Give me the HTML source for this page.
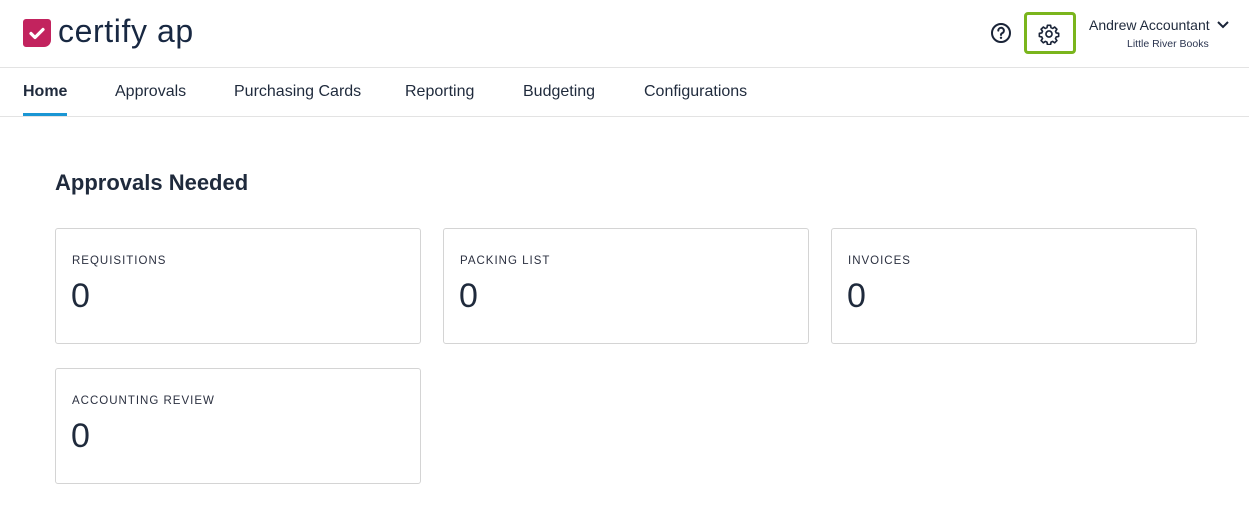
<!DOCTYPE html>
<html><head><style>
*{margin:0;padding:0;box-sizing:border-box}
body{width:1249px;height:509px;background:#fff;font-family:"Liberation Sans",sans-serif;color:#1f2a3c;position:relative;overflow:hidden}
.abs{position:absolute}
.hdr{top:0;left:0;width:1249px;height:68px;border-bottom:1px solid #e3e3e3}
.nav{top:68px;left:0;width:1249px;height:49px;border-bottom:1px solid #e3e3e3}
.nav span{position:absolute;top:15px;font-size:16px;color:#1f2a3c}
.card{border:1px solid #d4d4d4;border-radius:3px;width:366px;height:116px}
.card .l{position:absolute;left:16px;top:26px;font-size:11.5px;letter-spacing:1.0px;color:#2b3040}
.card .n{position:absolute;left:15px;top:48px;font-size:34px;color:#1f2a3c;font-weight:300}
</style></head><body>
<div class="abs hdr"></div>
<div class="abs" style="left:23px;top:19px;width:28px;height:28px;background:#c2235e;border-radius:3px 3px 7px 3px"></div>
<svg class="abs" style="left:23px;top:19px" width="28" height="28"><path d="M8 14.5l4 4 8-8" stroke="#fff" stroke-width="3.2" fill="none" stroke-linecap="round" stroke-linejoin="round"/></svg>
<div class="abs" style="left:58px;top:13px;font-size:32px;color:#182842;letter-spacing:0.6px">certify ap</div>
<svg class="abs" style="left:990px;top:22px" width="22" height="22" viewBox="0 0 22 22"><circle cx="11" cy="11" r="9" stroke="#1a2438" stroke-width="2" fill="none"/><path d="M8.3 8.6a2.8 2.8 0 1 1 3.8 2.6c-.8.4-1.1.9-1.1 1.8" stroke="#1a2438" stroke-width="2" fill="none" stroke-linecap="round"/><circle cx="11" cy="15.8" r="1.2" fill="#1a2438"/></svg>
<div class="abs" style="left:1024px;top:12px;width:52px;height:42px;border:3px solid #7ab51d;border-radius:4px"></div>
<svg class="abs" style="left:1038px;top:23px" width="22" height="22" viewBox="0 0 24 24"><path d="M10.3 2.5h3.4l.5 2.6 1.8.8 2.2-1.5 2.4 2.4-1.5 2.2.8 1.8 2.6.5v3.4l-2.6.5-.8 1.8 1.5 2.2-2.4 2.4-2.2-1.5-1.8.8-.5 2.6h-3.4l-.5-2.6-1.8-.8-2.2 1.5-2.4-2.4 1.5-2.2-.8-1.8-2.6-.5v-3.4l2.6-.5.8-1.8-1.5-2.2 2.4-2.4 2.2 1.5 1.8-.8z" stroke="#1a2438" stroke-width="1.8" fill="none" stroke-linejoin="round"/><circle cx="12" cy="12" r="3.3" stroke="#1a2438" stroke-width="1.8" fill="none"/></svg>
<div class="abs" style="left:1089px;top:17px;font-size:14px;color:#1f2a3c">Andrew Accountant</div>
<svg class="abs" style="left:1216px;top:20px" width="14" height="10"><path d="M2 2l5 5 5-5" stroke="#1a2438" stroke-width="2" fill="none"/></svg>
<div class="abs" style="left:1127px;top:38px;font-size:10.5px;color:#2b3550">Little River Books</div>
<div class="abs nav">
<span style="left:23px;font-weight:bold">Home</span>
<span style="left:115px">Approvals</span>
<span style="left:234px">Purchasing Cards</span>
<span style="left:405px">Reporting</span>
<span style="left:523px">Budgeting</span>
<span style="left:644px">Configurations</span>
</div>
<div class="abs" style="left:23px;top:113px;width:44px;height:3px;background:#1a96d4"></div>
<div class="abs" style="left:55px;top:170px;font-size:22px;font-weight:bold;color:#1f2a3c">Approvals Needed</div>
<div class="abs card" style="left:55px;top:228px"><div class="l">REQUISITIONS</div><div class="n">0</div></div>
<div class="abs card" style="left:443px;top:228px"><div class="l">PACKING LIST</div><div class="n">0</div></div>
<div class="abs card" style="left:831px;top:228px"><div class="l">INVOICES</div><div class="n">0</div></div>
<div class="abs card" style="left:55px;top:368px"><div class="l">ACCOUNTING REVIEW</div><div class="n">0</div></div>
</body></html>
